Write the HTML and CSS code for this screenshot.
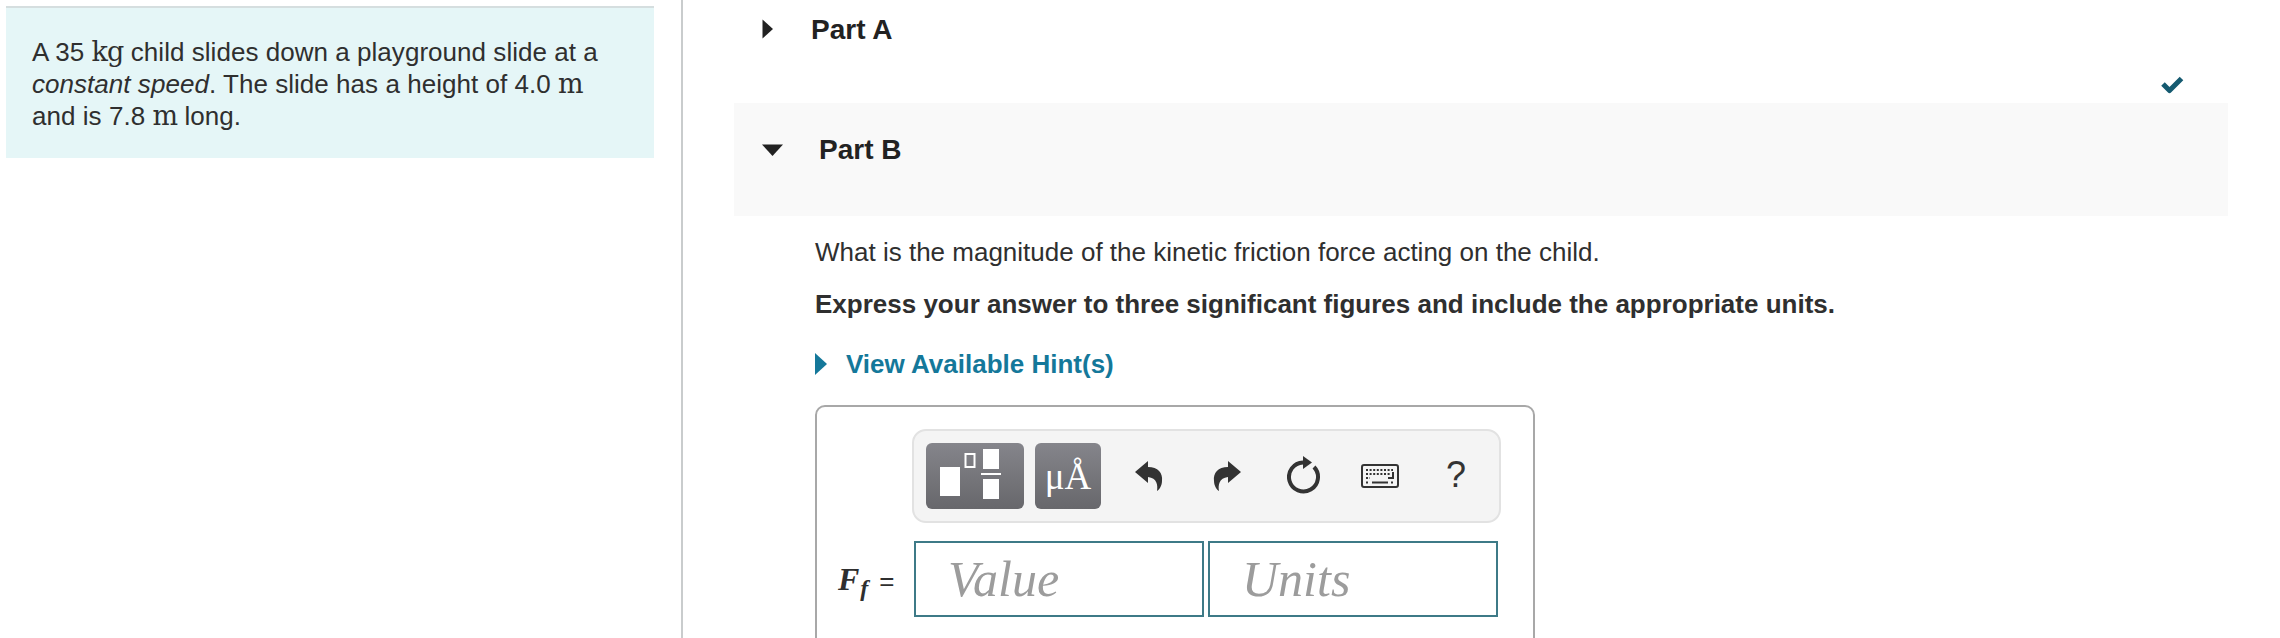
FILE: index.html
```html
<!DOCTYPE html>
<html lang="en">
<head>
<meta charset="utf-8">
<title>Part B</title>
<link rel="stylesheet" href="styles.css">
</head>
<body>
<div class="page">
  <aside class="left">
    <div class="intro">
      <p>A 35 <span class="unit">kg</span> child slides down a playground slide at a <em>constant speed</em>. The slide has a height of 4.0 <span class="unit">m</span> and is 7.8 <span class="unit">m</span> long.</p>
    </div>
  </aside>
  <main class="right">
    <div class="part part-a">
      <svg class="arrow-r" width="11" height="20" viewBox="0 0 11 20"><path d="M0.5 0.5 L11 10 L0.5 19.5 Z"/></svg>
      <h2>Part A</h2>
      <svg class="check" width="24" height="19" viewBox="0 0 24 19"><path d="M3 9 L9.500 15.500 L21.500 3.500" fill="none" stroke-width="5" stroke-linejoin="round"/></svg>
    </div>
    <div class="part part-b">
      <svg class="arrow-d" width="21" height="12" viewBox="0 0 21 12"><path d="M0 0.5 H21 L10.500 12 Z"/></svg>
      <h2>Part B</h2>
    </div>
    <div class="content">
      <p class="q">What is the magnitude of the kinetic friction force acting on the child.</p>
      <p class="ins">Express your answer to three significant figures and include the appropriate units.</p>
      <div class="hint">
        <svg width="12" height="22" viewBox="0 0 12 22"><path d="M0 0 L12 11 L0 22 Z"/></svg>
        <span>View Available Hint(s)</span>
      </div>
      <div class="answer">
        <div class="toolbar">
          <div class="btn btn-tpl">
            <svg width="98" height="66" viewBox="0 0 98 66">
              <rect x="14" y="24" width="20" height="29" fill="#fff"/>
              <rect x="39.500" y="11" width="9" height="13" fill="none" stroke="#fff" stroke-width="2"/>
              <rect x="57" y="6" width="16" height="20" fill="#fff"/>
              <rect x="55" y="30" width="20" height="2" fill="#fff"/>
              <rect x="57" y="36" width="16" height="20" fill="#fff"/>
            </svg>
          </div>
          <div class="btn btn-sym"><span>μÅ</span></div>
          <svg class="tool t-undo" width="28" height="32" viewBox="0 0 28 32"><path d="M0 12 L13 1 V7 C23 7 28 13 27 21 C27 26 24 30 22 31 C23 25 22 18 13 17 V23 Z"/></svg>
          <svg class="tool t-redo" width="28" height="32" viewBox="0 0 28 32"><path d="M28 12 L15 1 V7 C5 7 0 13 1 21 C1 26 4 30 6 31 C5 25 6 18 15 17 V23 Z"/></svg>
          <svg class="tool t-reset" width="34" height="38" viewBox="0 0 34 38"><path d="M16 6.500 A14.500 14.500 0 1 0 27 11" fill="none" stroke="#333" stroke-width="4"/><path d="M16 0 L25 6.500 L16 13 Z"/></svg>
          <svg class="tool t-keys" width="38" height="24" viewBox="0 0 38 24"><rect x="1" y="1" width="36" height="22" rx="2" fill="#f4f4f4" stroke="#333" stroke-width="2"/><path d="M5 6 H32 M5 10 H29 M5 14 H9 M5 18.500 H8 M30 18.500 H33" fill="none" stroke="#333" stroke-width="2" stroke-dasharray="2 1.600"/><path d="M32 8 V14 H27 M11 18.500 H27" fill="none" stroke="#333" stroke-width="2"/></svg>
          <span class="tool t-help">?</span>
        </div>
        <div class="row">
          <span class="label"><i>F</i><i class="sub">f</i><span class="eq">=</span></span>
          <div class="field f-value">Value</div>
          <div class="field f-units">Units</div>
        </div>
      </div>
    </div>
  </main>
</div>
</body>
</html>
```
FILE: styles.css
```css
html, body { margin: 0; padding: 0; background: #fff; }
body { width: 2280px; height: 638px; overflow: hidden; font-family: "Liberation Sans", Arial, sans-serif; color: #2f2f2f; }
p, h2 { margin: 0; }
.page { display: flex; height: 638px; }
.left { flex: none; width: 683px; padding: 6px 27px 0 6px; box-sizing: border-box; border-right: 2px solid #c9cccd; }
.intro { background: #e5f6f7; border-top: 2px solid #d5dedf; padding: 28px 32px 0 26px; height: 152px; box-sizing: border-box; font-size: 26px; line-height: 32px; letter-spacing: 0.04px; }
.unit { font-family: "DejaVu Serif", "Liberation Serif", serif; font-size: 27px; line-height: 0; letter-spacing: -0.8px; }
.right { flex: none; width: 1494px; margin-left: 51px; }
.part { display: flex; position: relative; }
.part h2 { font-size: 28px; line-height: 32px; font-weight: 700; color: #222; }
.part-a { height: 103px; padding: 14px 0 0 28px; box-sizing: border-box; }
.part-a h2 { margin-left: 38px; }
.arrow-r { margin-top: 5px; fill: #222; }
.check { position: absolute; left: 1426px; top: 75px; stroke: #155a70; }
.part-b { height: 113px; background: #f9f9f9; padding: 31px 0 0 28px; box-sizing: border-box; }
.part-b h2 { margin-left: 36px; }
.arrow-d { margin-top: 10px; fill: #222; }
.content { padding: 0 0 0 81px; }
.q { font-size: 26px; line-height: 32px; margin-top: 20px; }
.ins { font-size: 26px; line-height: 32px; margin-top: 20px; font-weight: 700; }
.hint { display: flex; align-items: center; gap: 19px; margin-top: 28px; color: #14789a; fill: #14789a; font-size: 26px; line-height: 32px; font-weight: 700; height: 32px; }
.answer { margin-top: 25px; width: 720px; height: 300px; box-sizing: border-box; border: 2px solid #a8a8a8; border-radius: 10px; padding: 22px 0 0 95px; }
.toolbar { display: flex; align-items: center; width: 589px; height: 94px; box-sizing: border-box; background: #f4f4f4; border: 2px solid #e2e2e2; border-radius: 14px; padding-left: 12px; }
.btn { height: 66px; border-radius: 6px; background: linear-gradient(#85858b, #67676b); display: flex; align-items: center; justify-content: center; flex: none; }
.btn svg { display: block; }
.btn-tpl { width: 98px; margin-right: 11px; }
.btn-sym { width: 66px; color: #fff; font-family: "Liberation Serif", serif; font-size: 37px; line-height: 66px; padding-top: 2px; box-sizing: border-box; }
.tool { flex: none; fill: #333; }
.t-undo { margin-left: 34px; }
.t-redo { margin-left: 50px; }
.t-reset { margin-left: 46px; margin-top: -2px; }
.t-keys { margin-left: 40px; }
.t-help { margin-left: 47px; font-size: 36px; line-height: 40px; margin-top: -3px; color: #333; }
.row { display: flex; align-items: center; margin-top: 18px; margin-left: -79px; }
.label { flex: none; width: 81px; padding-left: 5px; white-space: nowrap; box-sizing: border-box; color: #2f2f2f; display: flex; align-items: baseline; }
.label i { font-family: "Liberation Serif", serif; font-weight: 700; font-size: 32px; line-height: 40px; }
.label .sub { font-size: 24px; line-height: 0; position: relative; top: 6px; margin-left: 1px; }
.eq { font-family: "Liberation Sans", sans-serif; font-size: 26px; margin-left: 11px; }
.field { height: 76px; box-sizing: border-box; border: 2px solid #3e7a87; background: #fff; font-family: "Liberation Serif", serif; font-style: italic; font-size: 50px; line-height: 72px; color: #9c9c9c; padding-left: 32px; }
.f-value { width: 290px; margin-right: 4px; }
.f-units { width: 290px; }
```
